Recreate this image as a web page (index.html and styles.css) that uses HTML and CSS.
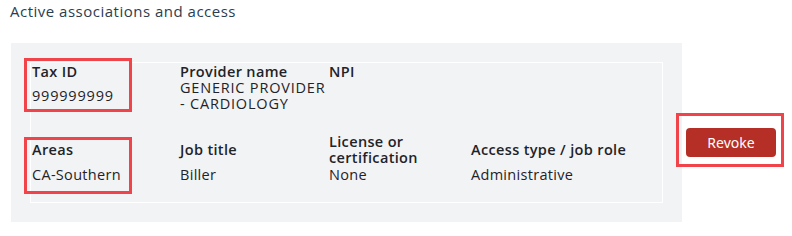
FILE: index.html
```html
<!DOCTYPE HTML>
<html lang="en">
<head>
  <meta charset="UTF-8">
  <title>Active associations and access</title>
  <link rel="stylesheet" href="styles.css">
</head>
<body>

  <div class="page">
    <h2 class="title">Active associations and access</h2>

    <div class="assoc">
      <div class="panel">
        <div class="details">
          <div class="mark mark-tax"></div>
          <div class="mark mark-areas"></div>

          <div class="label c1 r1">Tax ID</div>
          <div class="label c2 r1">Provider name</div>
          <div class="label c3 r1">NPI</div>

          <div class="value wide c1 r2">999999999</div>
          <div class="value wide c2 r2">GENERIC PROVIDER<br>- CARDIOLOGY</div>
          <div class="value c3 r2"></div>

          <div class="label c1 r4">Areas</div>
          <div class="label c2 r4">Job title</div>
          <div class="label c3 r4">License or<br>certification</div>
          <div class="label c4 r4">Access type / job role</div>

          <div class="value c1 r5">CA-Southern</div>
          <div class="value c2 r5">Biller</div>
          <div class="value c3 r5">None</div>
          <div class="value c4 r5">Administrative</div>
        </div>
      </div>

      <div class="actions">
        <button class="btn-revoke" type="button">Revoke</button>
      </div>
    </div>
  </div>

</body>
</html>
```

FILE: styles.css
```css
html, body {
  margin: 0;
  padding: 0;
  background: #fff;
}

body {
  font-family: "Open Sans", "Liberation Sans", sans-serif;
  color: #1f2328;
}

.page {
  padding: 0 0 0 10px;
}

.title {
  margin: 0;
  padding-top: 2px;
  height: 41px;
  font-size: 15px;
  font-weight: 400;
  letter-spacing: 0.5px;
  line-height: 18px;
  color: #2c3d4f;
}

.assoc {
  display: flex;
  align-items: flex-start;
}

.panel {
  margin-left: 1px;
  width: 633px;
  padding: 19px;
  background: #f2f3f5;
}

.details {
  position: relative;
  border: 1px solid #fff;
  padding: 0 0 19px 1px;
  display: grid;
  grid-template-columns: 148px 149px 142px 1fr;
  grid-template-rows: 17px 32px 20px 35px 16px;
  font-size: 14.5px;
  line-height: 16px;
}

.label {
  font-weight: 600;
  letter-spacing: 0.35px;
  align-self: center;
}

.value {
  align-self: center;
  letter-spacing: 0.3px;
}

.value.wide {
  letter-spacing: 0.8px;
}

.c1 { grid-column: 1; }
.c2 { grid-column: 2; }
.c3 { grid-column: 3; }
.c4 { grid-column: 4; }
.r1 { grid-row: 1; }
.r2 { grid-row: 2; }
.r4 { grid-row: 4; }
.r5 { grid-row: 5; }

/* red highlight boxes drawn over the cells */
.mark {
  grid-column: 1;
  justify-self: start;
  width: 102px;
  border: 3px solid #f0434a;
  margin-left: -8px;
}

.mark-tax {
  grid-row: 1 / 3;
  margin-top: -5px;
}

.mark-areas {
  grid-row: 4 / 6;
  margin-top: 5px;
  margin-bottom: -11px;
}

.actions {
  margin-top: 70px;
  margin-left: -6px;
  padding: 12px 5px 7px 7px;
  border: 3px solid #f0434a;
}

.btn-revoke {
  display: block;
  width: 90px;
  height: 29px;
  border: 0;
  border-radius: 4px;
  background: #b52f27;
  color: #fff;
  font-family: "Noto Sans", "Open Sans", sans-serif;
  font-size: 14px;
  cursor: pointer;
}
```
